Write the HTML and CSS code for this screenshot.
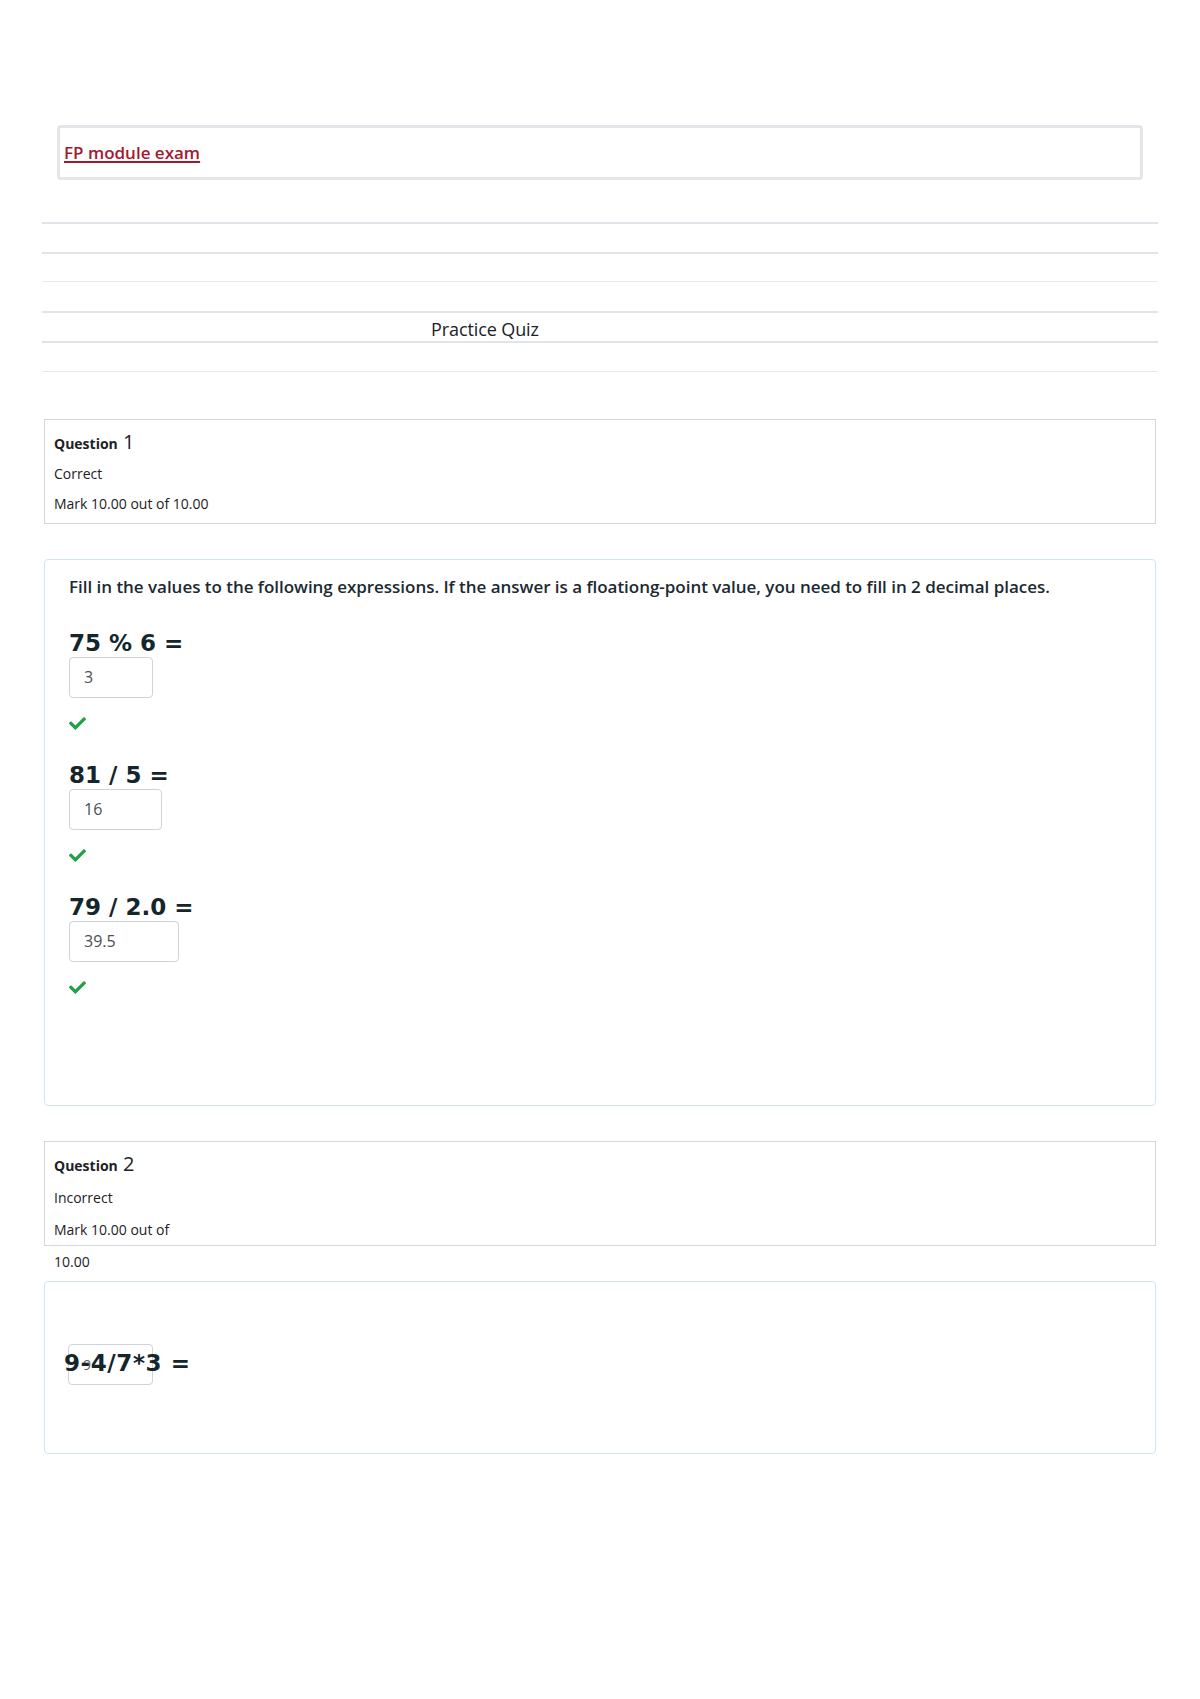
FILE: index.html
```html
<!DOCTYPE html>
<html lang="en">
<head>
<meta charset="utf-8">
<title>FP module exam - Practice Quiz</title>
<link rel="stylesheet" href="styles.css">
</head>
<body>
<div class="page">
  <div class="course-box">
    <a class="course-link" href="#">FP module exam</a>
  </div>

  <div class="rules">
    <div class="rule rule-a"></div>
    <div class="rule rule-b"></div>
    <div class="rule rule-c"></div>
    <div class="rule rule-d"><span class="quiz-title">Practice Quiz</span></div>
    <div class="rule rule-e"></div>
    <div class="rule rule-f"></div>
  </div>

  <div class="q-info">
    <div class="q-no">Question<span class="q-num"> 1</span></div>
    <div class="q-state">Correct</div>
    <div class="q-grade">Mark 10.00 out of 10.00</div>
  </div>

  <div class="q-body q-body-1">
    <p class="prompt">Fill in the values to the following expressions. If the answer is a floationg-point value, you need to fill in 2 decimal places.</p>

    <div class="sub">
      <div class="expr">75 % 6 =</div>
      <div class="answer answer-s">3</div>
      <div class="tick"><svg viewBox="0 64 512 384" width="17" height="13"><path d="M173.898 439.404l-166.4-166.4c-9.997-9.997-9.997-26.206 0-36.204l36.203-36.204c9.997-9.998 26.207-9.998 36.204 0L192 312.69 432.095 72.596c9.997-9.997 26.207-9.997 36.204 0l36.203 36.204c9.997 9.997 9.997 26.206 0 36.204l-294.4 294.401c-9.998 9.997-26.207 9.997-36.204-.001z"/></svg></div>
    </div>

    <div class="sub">
      <div class="expr">81 / 5 =</div>
      <div class="answer answer-m">16</div>
      <div class="tick"><svg viewBox="0 64 512 384" width="17" height="13"><path d="M173.898 439.404l-166.4-166.4c-9.997-9.997-9.997-26.206 0-36.204l36.203-36.204c9.997-9.998 26.207-9.998 36.204 0L192 312.69 432.095 72.596c9.997-9.997 26.207-9.997 36.204 0l36.203 36.204c9.997 9.997 9.997 26.206 0 36.204l-294.4 294.401c-9.998 9.997-26.207 9.997-36.204-.001z"/></svg></div>
    </div>

    <div class="sub">
      <div class="expr">79 / 2.0 =</div>
      <div class="answer answer-l">39.5</div>
      <div class="tick"><svg viewBox="0 64 512 384" width="17" height="13"><path d="M173.898 439.404l-166.4-166.4c-9.997-9.997-9.997-26.206 0-36.204l36.203-36.204c9.997-9.998 26.207-9.998 36.204 0L192 312.69 432.095 72.596c9.997-9.997 26.207-9.997 36.204 0l36.203 36.204c9.997 9.997 9.997 26.206 0 36.204l-294.4 294.401c-9.998 9.997-26.207 9.997-36.204-.001z"/></svg></div>
    </div>
  </div>

  <div class="q-info q-info-loose">
    <div class="q-no">Question<span class="q-num"> 2</span></div>
    <div class="q-state">Incorrect</div>
    <div class="q-grade">Mark 10.00 out of<br>10.00</div>
  </div>

  <div class="q-body q-body-2">
    <div class="overlay-wrap">
      <div class="answer answer-s answer-small">9</div>
      <div class="expr expr-over">9-4/7*3 =</div>
    </div>
  </div>
</div>
</body>
</html>
```

FILE: styles.css
```css
* {
  box-sizing: border-box;
}

html, body {
  margin: 0;
  padding: 0;
  background: #ffffff;
}

body {
  font-family: "Open Sans", "Noto Sans", "Liberation Sans", sans-serif;
  color: #1d2125;
}

.page {
  width: 1200px;
  padding-top: 125px;
  padding-bottom: 245px;
}

/* course heading box */
.course-box {
  margin: 0 57px;
  height: 55px;
  border: 3px solid #e4e7ea;
  border-radius: 4px;
  padding-left: 4px;
  line-height: 49px;
}

.course-link {
  font-size: 17px;
  font-weight: 600;
  letter-spacing: 0;
  color: #a4182f;
  text-decoration: underline;
  text-decoration-thickness: 2px;
  text-underline-offset: 2px;
}

/* stacked empty table rows */
.rules {
  margin: 42px 42px 0;
}

.rule {
  border-top: 2px solid #e1e4e8;
  height: 30px;
}

.rule-b {
  height: 29px;
}

.rule-c {
  border-top-width: 1px;
  border-top-color: #e6e8eb;
}

.rule-f {
  border-top-width: 1px;
  border-top-color: #e6e8eb;
  height: 1px;
}

.rule-d {
  padding-left: 389px;
  padding-top: 4px;
  line-height: 24px;
}

.quiz-title {
  font-size: 18px;
  letter-spacing: -0.1px;
  color: #1d2125;
}

/* question info box */
.q-info {
  margin: 47px 44px 0;
  height: 105px;
  border: 1px solid #d4d8dc;
  padding: 9px 9px 0;
  font-size: 14px;
  line-height: 30px;
  color: #1d2125;
}

.q-info-loose {
  margin-top: 35px;
  padding-top: 8px;
  line-height: 32px;
}

.q-no {
  font-weight: 700;
  font-size: 14px;
}

.q-num {
  font-weight: 400;
  font-size: 20px;
  line-height: 1;
}

/* question formulation box */
.q-body {
  margin: 35px 44px 0;
  border: 1px solid #cfe8ef;
  border-radius: 4px;
  padding: 0 24px;
}

.q-body-1 {
  padding-top: 15px;
  padding-bottom: 111px;
}

.prompt {
  margin: 0;
  font-size: 17px;
  font-weight: 600;
  line-height: 24px;
  letter-spacing: -0.03px;
  color: #1b2a32;
}

.sub {
  margin-top: 31px;
}

.sub + .sub {
  margin-top: 32px;
}

.expr {
  font-family: "DejaVu Sans", "Verdana", sans-serif;
  font-weight: 700;
  font-size: 23px;
  line-height: 26px;
  color: #14262c;
  white-space: nowrap;
}

.answer {
  margin-top: 1px;
  height: 41px;
  border: 1px solid #ced4da;
  border-radius: 4px;
  padding-left: 14px;
  font-size: 16px;
  line-height: 39px;
  color: #4a5056;
}

.answer-s {
  width: 84px;
}

.answer-m {
  width: 93px;
}

.answer-l {
  width: 110px;
}

.tick {
  margin-top: 19px;
  height: 13px;
  line-height: 0;
}

.tick svg {
  fill: #22a045;
}

.q-body-2 {
  height: 173px;
  padding-top: 62px;
  padding-left: 23px;
}

.overlay-wrap {
  position: relative;
  width: 85px;
}

.answer-small {
  width: 85px;
  margin-top: 0;
  font-size: 14px;
  color: #5a6066;
}

.expr-over {
  position: absolute;
  left: -4px;
  top: 6px;
  letter-spacing: 0.6px;
}
```
